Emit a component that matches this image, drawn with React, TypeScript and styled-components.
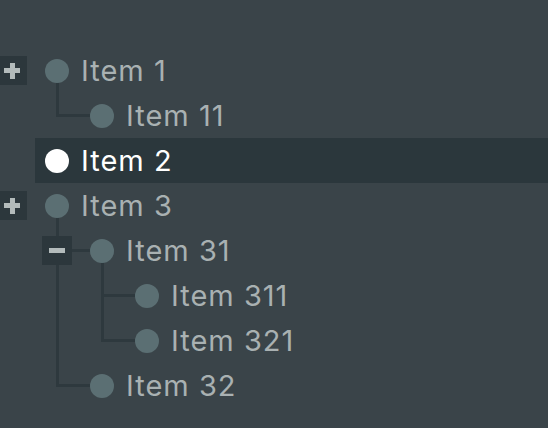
import React from 'react';
import styled, { createGlobalStyle } from 'styled-components';

const GlobalStyle = createGlobalStyle`
  html, body {
    margin: 0;
    padding: 0;
    background: #3a4449;
  }
  body {
    font-family: Inter, "Noto Sans", sans-serif;
  }
`;

type TreeNode = {
  label: string;
  toggle?: 'plus' | 'minus';
  selected?: boolean;
  children?: TreeNode[];
};

const tree: TreeNode[] = [
  { label: 'Item 1', toggle: 'plus', children: [{ label: 'Item 11' }] },
  { label: 'Item 2', selected: true },
  {
    label: 'Item 3',
    toggle: 'plus',
    children: [
      {
        label: 'Item 31',
        toggle: 'minus',
        children: [{ label: 'Item 311' }, { label: 'Item 321' }],
      },
      { label: 'Item 32' },
    ],
  },
];

const TreeWrapper = styled.div`
  width: 548px;
  height: 428px;
  overflow: hidden;
  padding-top: 48px;
  box-sizing: border-box;
`;

const NodeList = styled.ul<{ $root?: boolean }>`
  list-style: none;
  margin: 0;
  padding: 0 0 0 ${(p) => (p.$root ? 35 : 45)}px;
`;

const NodeItem = styled.li<{ $child: boolean; $last: boolean }>`
  position: relative;

  &::before {
    content: '';
    display: ${(p) => (p.$child ? 'block' : 'none')};
    position: absolute;
    left: -24px;
    top: -10px;
    width: 3px;
    height: ${(p) => (p.$last ? '34px' : 'calc(100% + 10px)')};
    background: #2e393e;
  }

  &::after {
    content: '';
    display: ${(p) => (p.$child ? 'block' : 'none')};
    position: absolute;
    left: -24px;
    top: 21px;
    width: 34px;
    height: 3px;
    background: #2e393e;
  }
`;

const Row = styled.div<{ $selected?: boolean }>`
  position: relative;
  display: flex;
  align-items: center;
  gap: 12px;
  height: 45px;
  padding-left: 10px;
  background: ${(p) => (p.$selected ? '#2b373c' : 'transparent')};
`;

const Dot = styled.span<{ $selected?: boolean }>`
  width: 24px;
  height: 24px;
  border-radius: 50%;
  flex-shrink: 0;
  background: ${(p) => (p.$selected ? '#ffffff' : '#5b6f73')};
`;

const Label = styled.span<{ $selected?: boolean }>`
  font-size: 29px;
  font-weight: 400;
  letter-spacing: 1px;
  line-height: 45px;
  color: ${(p) => (p.$selected ? '#ffffff' : '#a9b1b2')};
  white-space: nowrap;
`;

const Toggle = styled.span`
  position: absolute;
  z-index: 1;
  left: -38px;
  top: 8px;
  width: 30px;
  height: 29px;
  background: #2c373c;
  display: flex;
  align-items: center;
  justify-content: center;
`;

const Bar = styled.span<{ $vertical?: boolean }>`
  position: absolute;
  background: #b3bbbb;
  width: ${(p) => (p.$vertical ? 5 : 16)}px;
  height: ${(p) => (p.$vertical ? 16 : 5)}px;
`;

function Node({ node, child, last }: { node: TreeNode; child: boolean; last: boolean }) {
  return (
    <NodeItem $child={child} $last={last}>
      <Row $selected={node.selected}>
        {node.toggle && (
          <Toggle>
            <Bar />
            {node.toggle === 'plus' && <Bar $vertical />}
          </Toggle>
        )}
        <Dot $selected={node.selected} />
        <Label $selected={node.selected}>{node.label}</Label>
      </Row>
      {node.children && (
        <NodeList>
          {node.children.map((c, i) => (
            <Node key={c.label} node={c} child last={i === node.children!.length - 1} />
          ))}
        </NodeList>
      )}
    </NodeItem>
  );
}

export default function App() {
  return (
    <TreeWrapper>
      <GlobalStyle />
      <NodeList $root>
        {tree.map((n, i) => (
          <Node key={n.label} node={n} child={false} last={i === tree.length - 1} />
        ))}
      </NodeList>
    </TreeWrapper>
  );
}
